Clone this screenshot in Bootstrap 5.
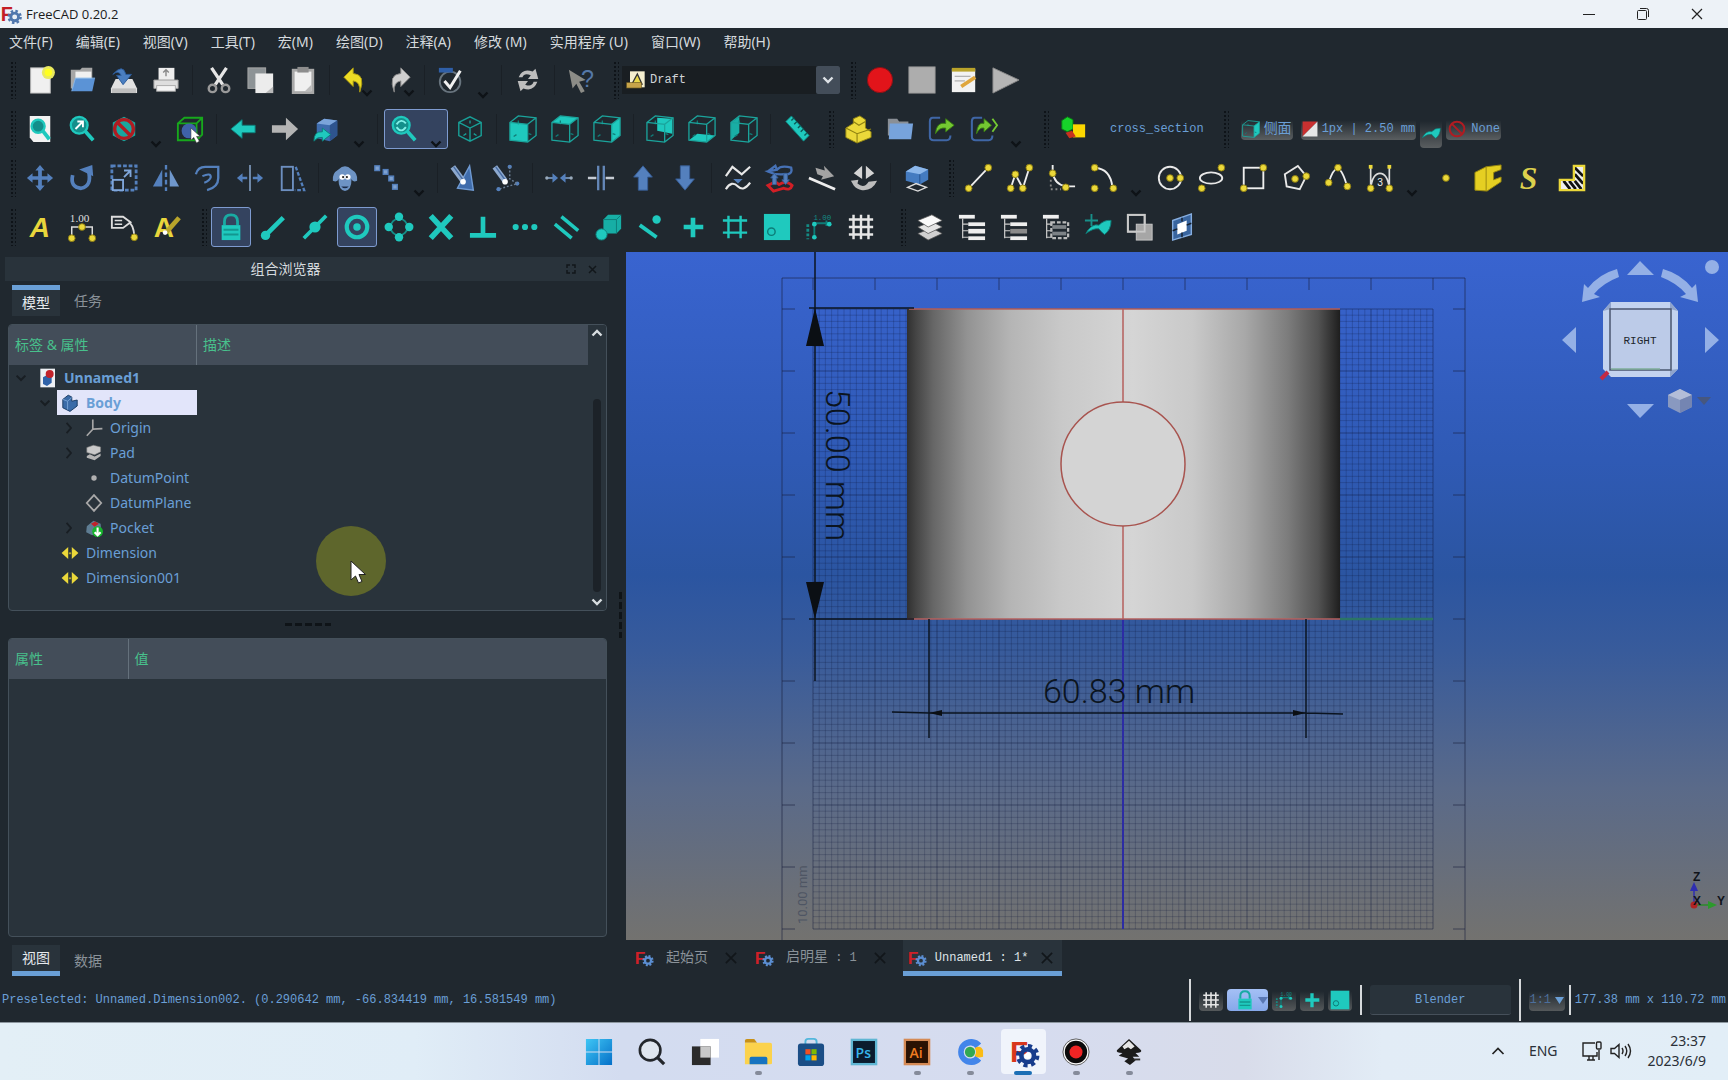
<!DOCTYPE html>
<html lang="zh-CN">
<head>
<meta charset="utf-8">
<meta name="viewport" content="width=device-width, initial-scale=1">
<title>FreeCAD 0.20.2</title>
<link href="https://cdn.jsdelivr.net/npm/bootstrap@5.3.0/dist/css/bootstrap.min.css" rel="stylesheet">
<style>
:root{--ink:#20282f;--panel:#29333b;--head:#434d59;--line:#44505a;--blue:#6a9fd6;--green:#48c08c}
body{font-family:"Noto Sans","Noto Sans CJK SC",sans-serif;font-size:14px;line-height:20px;color:#d5dade;background:var(--ink)}
button{font:inherit;color:inherit;background:none;border:0;padding:0}
svg{display:block;flex:none}
.app{height:100vh;overflow:hidden}
.mono{font-family:"Liberation Mono","Noto Sans CJK SC",monospace;font-size:12px}
.titlebar{height:28px;background:#edf2f7;color:#1b1b1b;font-size:13px;font-family:"Open Sans",sans-serif}
.titlebar .wbtn{width:54px;height:28px}
.menubar{height:27px;padding:0 0 0 9px;gap:23px}
.menubar button{white-space:nowrap}
.toolbars{padding-bottom:1px}
.toolrow{height:49px}
.grip{width:6px;height:38px;margin:0 3px 0 11px;background-image:radial-gradient(circle,#0e1318 1px,transparent 1px);background-size:4px 4px}
.grip:first-child{margin-left:10px}
.tsep{width:1px;height:30px;margin:0 5px;background:#1a2026}
.tool{width:40px;height:40px;margin:0 1px;border:1px solid transparent;border-radius:3px;position:relative;display:flex;align-items:center;justify-content:center}
.tool.wide{width:64px;justify-content:flex-start;padding-left:5px}
.tool.wide .arr{right:5px;bottom:0}
.tool .arr{position:absolute;right:2px;bottom:2px}
.glyph{overflow:visible}
.tool.on{background:#34435f;border-color:#7e9bd0}
.combo{width:218px;height:28px;background:#191e22}
.combo select{appearance:none;background:none;border:0;color:#d0d3d6;outline:0}
.combo .drop{width:24px;height:28px;background:#434d59;border-radius:2px}
.chip{height:22px;padding:0 1px;gap:4px;color:var(--blue);border-radius:4px;background:linear-gradient(#20282f 10%,#5a5e60);white-space:nowrap}
.chip.tall{height:30px;margin-bottom:-8px}
.groupname{color:var(--blue)}
.dock{flex:0 0 626px;padding:5px 19px 0 8px;position:relative}
.docktitle{height:24px;background:var(--panel);margin:0 -2px 4px -3px}
.tabbtn{height:31px;width:48px;color:#8a9299;font-size:14px}
.tabbtn.on{background:var(--panel);color:#e6eaee}
.tabbtn.topbar{border-top:5px solid var(--blue)}
.tabbtn.botbar{border-bottom:5px solid var(--blue)}
.tabs{gap:4px;padding-left:4px}
.pane{border:1px solid var(--line);border-radius:4px;background:var(--panel);min-height:0;overflow:hidden}
.treepane{flex:287 1 0}
.proppane{flex:299 1 0}
.headrow{height:40px;background:var(--head);color:var(--green)}
.headrow .c1{width:188px;padding-left:6px;border-right:1px solid #65717c}
.headrow .c2{padding-left:6px}
.tree{color:var(--blue);padding:0}
.tree li{height:25px;display:flex;align-items:center;width:188px;white-space:nowrap}
.tree li .tw{width:24px;flex:none;display:flex;justify-content:center}
.tree .lab{display:flex;align-items:center;gap:7px;height:25px;padding-left:4px;flex:1}
.tree .sel{background:#e2e5fa}
.tree .d1{padding-left:24px}.tree .d2{padding-left:48px}
.scroll{width:18px;background:var(--panel)}
.scroll .thumb{width:8px;flex:1;margin:62px 0 6px;background:#1c2228;border-radius:4px}
.dash{height:27px}
.dash i{width:46px;height:3px;background:repeating-linear-gradient(90deg,#0f1418 0 7px,transparent 7px 10px)}
.vdash{position:absolute;right:4px;top:340px;width:3px;height:46px;background:repeating-linear-gradient(#0f1418 0 7px,transparent 7px 10px)}
.prop{width:100%;color:var(--green);border-collapse:collapse}
.prop th{height:40px;background:var(--head);font-weight:400;padding-left:6px}
.prop th:first-child{width:119px;border-right:1px solid #65717c}
.pointer{position:absolute;left:316px;top:274px}
.doctabs{height:36px}
.doctab{height:36px;padding:4px 8px 0 4px;border-bottom:5px solid transparent;color:#8a9299;white-space:nowrap}
.doctab.on{background:var(--panel);border-color:var(--blue);color:#dfe4e8}
.doctab .cjk{font-size:14px}
.status{height:46px;color:var(--blue);padding:2px 2px 0 2px}
.vl{width:2px;background:#d5d8da}
.mini{width:24px;height:22px;border-radius:4px;background:linear-gradient(#20282f 10%,#55595b);display:flex;align-items:center;justify-content:center}
.mini.lock{width:41px;background:linear-gradient(#a4c0f5,#86a8ea);gap:3px;padding-left:8px}
.mini.zoomscale{width:36px;color:#4d6f9c}
.style{width:141px;height:30px;background:var(--panel);border-bottom:1px solid #46505a;border-radius:3px;color:var(--blue)}
.taskbar{height:58px;background:linear-gradient(90deg,#e3eff6 0,#e0edf7 24%,#d3dcf0 36%,#d6dcef 60%,#d8dcea 72%,#e2ecf6 80%,#e2eef7);color:#2a3038;position:relative;border-top:1px solid #8d979f}
.apps{gap:8px}
.appbtn{width:45px;height:45px;border-radius:4px;position:relative;display:flex;align-items:center;justify-content:center}
.appbtn.on{background:#f0f4fb}
.appbtn.run::after{content:"";position:absolute;bottom:-1px;width:7px;height:4px;border-radius:2px;background:#858b9a}
.appbtn.on::after{width:18px;background:#1c6fb5}
.tray{position:absolute;right:22px;top:0;height:55px}
</style>
<script src="https://cdn.jsdelivr.net/npm/bootstrap@5.3.0/dist/js/bootstrap.bundle.min.js"></script>
</head>
<body>
<div class="app d-flex flex-column">

<header class="titlebar d-flex align-items-center flex-shrink-0">
  <span data-icon="fclogo" data-size="22"></span>
  <span class="ps-1 me-auto">FreeCAD 0.20.2</span>
  <button class="wbtn d-flex align-items-center justify-content-center" aria-label="Minimize"><svg width="12" height="12"><path d="M0 6.5h12" stroke="#222"/></svg></button>
  <button class="wbtn d-flex align-items-center justify-content-center" aria-label="Restore"><svg width="12" height="12" fill="none" stroke="#222"><rect x=".5" y="2.500" width="9" height="9" rx="1"/><path d="M3 .5h6.500a2 2 0 0 1 2 2V9"/></svg></button>
  <button class="wbtn d-flex align-items-center justify-content-center me-1" aria-label="Close"><svg width="12" height="12"><path d="M1 1l10 10M11 1L1 11" stroke="#222" stroke-width="1.200"/></svg></button>
</header>

<nav class="menubar d-flex align-items-center flex-shrink-0">
  <button>文件(F)</button><button>编辑(E)</button><button>视图(V)</button><button>工具(T)</button><button>宏(M)</button><button>绘图(D)</button><button>注释(A)</button><button>修改 (M)</button><button>实用程序 (U)</button><button>窗口(W)</button><button>帮助(H)</button>
</nav>

<div class="toolbars flex-shrink-0">
  <div class="toolrow d-flex align-items-center">
    <div class="d-flex align-items-center" data-bar="new open save print | cut copy paste | undo^ redo^ | valid_ | refresh | whats"></div>
    <i class="grip"></i>
    <div class="combo d-flex align-items-center">
      <span class="ps-1" data-icon="draft" data-size="20"></span>
      <select class="mono flex-fill ps-1" aria-label="Workbench"><option>Draft</option></select>
      <span class="drop d-flex align-items-center justify-content-center"><svg width="12" height="8"><path d="M1.500 1.500L6 6l4.500-4.500" fill="none" stroke="#dde2e6" stroke-width="2.400"/></svg></span>
    </div>
    <div class="d-flex align-items-center" data-bar="rec stop macro play"></div>
  </div>
  <div class="toolrow d-flex align-items-center">
    <div class="d-flex align-items-center" data-bar="fitall fitsel drawstyle_ boxsel | back fwd link_ | zoomv_* iso | cfront ctop cright | crear cbottom cleft | measure"></div>
    <div class="d-flex align-items-center" data-bar="part folder mklink mklinks_"></div>
    <div class="d-flex align-items-center ms-1" data-bar="group"></div>
    <button class="groupname mono ps-3 pe-2">cross_section</button>
    <i class="grip me-2"></i>
    <div class="d-flex mono gap-1 ms-1 align-items-center">
      <button class="chip d-flex align-items-center"><span data-icon="cright" data-size="18"></span><span style="font-size:14px">侧面</span></button>
      <button class="chip d-flex align-items-center ms-1"><span data-icon="style" data-size="16"></span>1px | 2.50 mm</button>
      <button class="chip tall d-flex align-items-center" aria-label="Construction"><span data-icon="trowel" data-size="20"></span></button>
      <button class="chip d-flex align-items-center"><span data-icon="none" data-size="20"></span>None</button>
    </div>
  </div>
  <div class="toolrow d-flex align-items-center">
    <div class="d-flex align-items-center" data-bar="move rotate scale mirror offset trimex stretch | clone array_ | edit subel | join split up down | wire2bs shapes slope flip | view2d"></div>
    <div class="d-flex align-items-center" data-bar="line wire fillet arc_ circle ellipse rect polygon bspline bezier_ point facebind sstring hatch"></div>
  </div>
  <div class="toolrow d-flex align-items-center">
    <div class="d-flex align-items-center" data-bar="text dim label astyle"></div>
    <div class="d-flex align-items-center ms-1" data-bar="lock* send smid scenter* sangle sinter sperp sext spar sspecial snear sortho sgrid swp sdim gridw"></div>
    <div class="d-flex align-items-center ms-2" data-bar="layers list1 list2 list3 trowelp addc wpproxy"></div>
  </div>
</div>

<main class="d-flex flex-fill" style="min-height:0">
  <aside class="dock d-flex flex-column">
    <div class="docktitle d-flex align-items-center flex-shrink-0">
      <span class="flex-fill text-center">组合浏览器</span>
      <button aria-label="Float" class="me-2 pe-1"><svg width="10" height="10" stroke="#12171b" fill="none" stroke-width="1.500"><path d="M1 4V1h3M6 1h3v3M9 6v3H6M4 9H1V6"/></svg></button>
      <button aria-label="Close" class="me-2 pe-1"><svg width="9" height="9" stroke="#12171b" stroke-width="1.500"><path d="M1 1l7 7M8 1L1 8"/></svg></button>
    </div>
    <div class="tabs d-flex flex-shrink-0 mb-2"><button class="tabbtn on topbar">模型</button><button class="tabbtn">任务</button></div>
    <div class="pane treepane d-flex">
      <div class="flex-fill">
        <div class="headrow d-flex"><div class="c1 d-flex align-items-center">标签 &amp; 属性</div><div class="c2 d-flex align-items-center">描述</div></div>
        <ul class="tree list-unstyled m-0">
          <li><span class="tw" data-icon="tdown" data-size="12"></span><span class="lab fw-bold"><span data-icon="doc" data-size="20"></span>Unnamed1</span></li>
          <li class="d1"><span class="tw" data-icon="tdown" data-size="12"></span><span class="lab sel fw-bold"><span data-icon="body" data-size="18"></span>Body</span></li>
          <li class="d2"><span class="tw" data-icon="tright" data-size="12"></span><span class="lab"><span data-icon="origin" data-size="18"></span>Origin</span></li>
          <li class="d2"><span class="tw" data-icon="tright" data-size="12"></span><span class="lab"><span data-icon="pad" data-size="18"></span>Pad</span></li>
          <li class="d2"><span class="tw"></span><span class="lab"><span data-icon="dpoint" data-size="18"></span>DatumPoint</span></li>
          <li class="d2"><span class="tw"></span><span class="lab"><span data-icon="dplane" data-size="18"></span>DatumPlane</span></li>
          <li class="d2"><span class="tw" data-icon="tright" data-size="12"></span><span class="lab"><span data-icon="pocket" data-size="18"></span>Pocket</span></li>
          <li class="d1"><span class="tw"></span><span class="lab"><span data-icon="dimi" data-size="18"></span>Dimension</span></li>
          <li class="d1"><span class="tw"></span><span class="lab"><span data-icon="dimi" data-size="18"></span>Dimension001</span></li>
        </ul>
      </div>
      <div class="scroll d-flex flex-column align-items-center py-1">
        <svg width="12" height="8"><path d="M1.500 6.500L6 2l4.500 4.500" fill="none" stroke="#d8dde0" stroke-width="2.400"/></svg>
        <span class="thumb"></span>
        <svg width="12" height="8"><path d="M1.500 1.500L6 6l4.500-4.500" fill="none" stroke="#d8dde0" stroke-width="2.400"/></svg>
      </div>
    </div>
    <div class="dash d-flex align-items-center justify-content-center flex-shrink-0"><i></i></div>
    <div class="pane proppane">
      <table class="prop"><thead><tr><th>属性</th><th>值</th></tr></thead></table>
    </div>
    <div class="tabs d-flex flex-shrink-0 mt-2"><button class="tabbtn on botbar">视图</button><button class="tabbtn">数据</button></div>
    <span class="vdash"></span>
    <svg class="pointer" width="70" height="70"><circle cx="35" cy="35" r="35" fill="#5e662c"/><path d="M35 35v19l4.500-4 3 7 3.500-1.500-3-7h6.500z" fill="#fff" stroke="#222"/></svg>
  </aside>

  <section class="d-flex flex-column flex-fill" style="min-width:0">
    <div class="flex-fill" style="min-height:0">
      <svg id="view" width="100%" height="100%" viewBox="626 252 1102 688" preserveAspectRatio="xMidYMid slice"></svg>
    </div>
    <div class="doctabs d-flex flex-shrink-0 mono">
      <button class="doctab d-flex align-items-center ms-1"><span data-icon="fctab" data-size="20"></span><span class="cjk ps-2 ms-1 me-3">起始页</span><span data-icon="tabx" data-size="14"></span></button>
      <button class="doctab d-flex align-items-center ms-1"><span data-icon="fctab" data-size="20"></span><span class="ps-2 ms-1 me-3"><span class="cjk">启明星</span> : 1</span><span data-icon="tabx" data-size="14"></span></button>
      <button class="doctab on d-flex align-items-center ms-2"><span data-icon="fctab" data-size="20"></span><span class="px-2 me-1">Unnamed1 : 1*</span><span data-icon="tabx" data-size="14"></span></button>
    </div>
  </section>
</main>

<footer class="status mono d-flex align-items-center flex-shrink-0">
  <span class="me-auto text-nowrap">Preselected: Unnamed.Dimension002. (0.290642 mm, -66.834419 mm, 16.581549 mm)</span>
  <i class="vl me-2" style="height:42px"></i>
  <div class="d-flex gap-1 align-items-center">
    <button class="mini" aria-label="Grid"><span data-icon="gridw" data-size="18"></span></button>
    <button class="mini lock" aria-label="Snap lock"><span data-icon="lock" data-size="20"></span><svg width="10" height="8"><path d="M0 1h10L5 8z" fill="#5a78b4"/></svg></button>
    <button class="mini" aria-label="Snap dimensions"><span data-icon="sdim" data-size="18"></span></button>
    <button class="mini" aria-label="Ortho"><span data-icon="sortho" data-size="20"></span></button>
    <button class="mini" aria-label="Working plane"><span data-icon="swp" data-size="20"></span></button>
  </div>
  <i class="vl ms-2 me-2" style="height:30px"></i>
  <button class="style">Blender</button>
  <i class="vl ms-2 me-2" style="height:42px"></i>
  <button class="mini zoomscale gap-1">1:1<svg width="9" height="7"><path d="M0 0h9L4.500 7z" fill="#6a9fd6"/></svg></button>
  <i class="vl ms-1 me-1" style="height:30px"></i>
  <span class="text-nowrap">177.38 mm x 110.72 mm</span>
</footer>

<footer class="taskbar d-flex align-items-center justify-content-center flex-shrink-0">
  <div class="apps d-flex" id="apps"></div>
  <div class="tray d-flex align-items-center">
    <button aria-label="Hidden icons" class="me-4"><svg width="14" height="10"><path d="M1.500 8L7 2.500 12.500 8" fill="none" stroke="#222" stroke-width="1.700"/></svg></button>
    <span class="me-4">ENG</span>
    <svg class="me-2" width="20" height="20" fill="none" stroke="#222" stroke-width="1.400"><path d="M13 2H1v13h14v-4M5 19h8M7 15v4M11 15v4M17 9v10"/><rect x="14.500" y="1" width="4.500" height="7" rx="1"/></svg>
    <svg class="me-3" width="22" height="20" fill="none" stroke="#222" stroke-width="1.400"><path d="M1 7.500h3.500L9 3.500v13l-4.500-4H1zM12 7q2 3 0 6M15 5q3.500 5 0 10M18 3q5 7 0 14"/></svg>
    <div class="text-end">23:37<br>2023/6/9</div>
  </div>
</footer>
</div>

<script>
const T='#1fc9be',TD='#0d7d78',B='#5480bd',Y='#ebd83a';
const p=(d,f,s,w)=>`<path d="${d}" fill="${f||'none'}"${s?` stroke="${s}" stroke-width="${w||1.5}"`:''}/>`;
const c=(x,y,r,f,s,w)=>`<circle cx="${x}" cy="${y}" r="${r}" fill="${f||'none'}"${s?` stroke="${s}" stroke-width="${w||1.5}"`:''}/>`;
const r=(x,y,w,h,f,s,k)=>`<rect x="${x}" y="${y}" width="${w}" height="${h}" fill="${f||'none'}"${s?` stroke="${s}" stroke-width="${k||1.5}"`:''}/>`;
const t=(x,y,z,f,s,e)=>`<text x="${x}" y="${y}" font-size="${z}" fill="${f}" ${e||''}>${s}</text>`;
const dots=(...a)=>{let o='';for(let i=0;i<a.length;i+=2)o+=c(a[i],a[i+1],3.6,Y,'#8a7a10',1);return o};
const faces={front:'M1 8L20 10V29L1 27Z',top:'M1 8L10 1L29 3L20 10Z',right:'M20 10L29 3V22L20 29Z',rear:'M12 3L28 4V20L12 17Z',left:'M1 8L10 2V19L1 27Z',bottom:'M1 27L10 20L29 22L20 29Z'};
const cube=(k)=>(k?p(faces[k],k=='left'?'#19aea5':T):'')+p('M10 6V10M5 23L8 21M21 20L24 21','','#107d78',1.400)+p('M1 8L10 1L29 3V22L20 29L1 27ZM1 8L20 10V29M20 10L29 3','','#1ba49c',1.400);
const solid=(a,b,d)=>p('M4 9L12 4L26 6V22L18 28L4 25Z',a)+p('M4 9L12 4L26 6L18 11Z',b)+p('M18 11L26 6V22L18 28Z',d);
const lens=(x,y,q)=>p(`M${x+6} ${y+6}L${x+15} ${y+16}`,'',T,4)+c(x,y,q,'#148f8b',T,2.5);
const gear=(x,y,q,f,h)=>`<circle cx="${x}" cy="${y}" r="${q}" fill="none" stroke="${f}" stroke-width="${q*.8}" stroke-dasharray="${q*.42} ${q*.365}"/><circle cx="${x}" cy="${y}" r="${q*.75}" fill="none" stroke="${f}" stroke-width="${q*.55}"/>`+(h?c(x,y,q*.35,h):'');
const bold='font-family="Liberation Sans" font-weight="700"';
const no=(x,y,q,w)=>c(x,y,q,'','#b01c22',w)+p(`M${x-q*.7} ${y-q*.7}L${x+q*.7} ${y+q*.7}`,'','#b01c22',w);
const list=(m)=>r(1,2,17,4,'#f0f0f0')+p('M5 6V27M5 12H11M5 19H11M5 26H11','','#ccc',1.3)+(m==3?`<path d="M10 10H28V27H10Z" fill="none" stroke="#bbb" stroke-width="2.400" stroke-dasharray="4 2"/>`+r(11,13,15,4,'#7d8286')+r(11,20,15,4,'#7d8286'):r(11,10,18,4,'#eee')+r(11,17,18,5,m==2?'#8a8a8a':'#eee')+r(11,25,18,4,'#eee'));
const trowel=p('M2 22Q8 11 16 13Q22 7 29 8Q29 18 22 23Q18 20 16 17Q10 16 2 22Z',T,TD,1);
const blueArr=(d)=>p(d,B,'#365d96',1);
const pen=p('M3 3L14 18','','#8da9cf',6)+p('M4 3L14 17','','#456aa0',1.500)+c(14,19,3,'#fff');
const I={
fclogo:t(1,25,27,'#c41e26','F',bold)+gear(20,19,7,'#5077ad','#e9eef5'),
fctab:t(1,24,26,'#cf2028','F',bold)+gear(21,19,6,'#5b8ed2'),
new:r(5,2,21,27,'#f0f0f0','#bbb',1)+c(24,7,7,'#e9e95f')+c(24,7,4,'#ffff20'),
open:p('M3 4H13L15 2H26V24H3Z','#a6a6a6')+r(8,6,17,16,'#f0f0f0')+p('M4 27L8 13H29L26 27Z','#5b93d6')+p('M4 27L8 13H29','','#83b5ea',1),
save:p('M6 14H24L29 24V29H1V24Z','#e2e2e2')+r(2,24,26,5,'#bfbfbf')+p('M3 9Q14-3 17 9H23L14 20L7 10H12Q9 4 3 9Z','#4a7ec0','#2c5c9c',1),
print:r(7,2,17,13,'#eee')+p('M15 4V11M12 7L15 4L18 7','','#888',1.5)+p('M2 15H28V24H2Z','#dedede','#999',1)+r(5,21,20,6,'#f4f4f4','#aaa',1),
cut:p('M7 2L19 20M23 2L11 20','','#e6e6e6',3.5)+c(8,24,4,'','#9a9a9a',2.6)+c(22,24,4,'','#9a9a9a',2.6),
copy:r(1,2,19,22,'#8d9396','#a8a8a8',1)+r(9,8,19,21,'#ececec')+p('M20 29L28 22V29Z','#b9b9b9'),
paste:r(3,3,24,27,'#a9a9a9')+r(6,6,18,21,'#f0f0f0')+r(9,1,12,6,'#8d8d8d')+p('M17 27L24 20V27Z','#bbb'),
undo:p('M2 12L12 2V8Q26 9 19 28Q20 17 12 16V22Z','#eddc25','#a89810',1),
redo:p('M28 12L18 2V8Q4 9 11 28Q10 17 18 16V22Z','#cfcfcf','#888',1),
valid:c(14,17,11,'','#68747e',2)+p('M8 16L14 23L25 5','','#f0f0f0',3.2)+r(2,2,15,5,'#2f5fa8'),
refresh:p('M5 12Q9 2 20 6L23 3L26 14H15L18 10Q11 7 9 12ZM25 17Q21 28 10 24L7 27L4 16H15L12 20Q19 23 21 17Z','#bdbdbd'),
whats:p('M2 4L20 15L13 17L19 27L15 29L10 19L6 24Z','#8c8c87')+t(15,22,25,'#5578a8','?','font-family="Liberation Sans"'),
draft:r(6,2,22,24,'#f5efcf')+p('M9 21L17 6L24 21Z','#e9d84a','#333',2)+r(1,19,22,8,'#c7a44a','#6e5a20',1),
rec:c(15,15,13.500,'#e2141a','#8b1014',1),stop:r(1,1,28,28,'#adadad','#9a9a9a',1),
macro:r(2,3,25,25,'#f2f2f2')+r(2,2,25,4,'#b9a32a')+p('M5 11H22M5 16H16','','#999',1)+p('M12 22L27 12','','#dfa63d',4),
play:p('M1 2L29 15L1 29Z','#b5b5b5','#888',1),
fitall:p('M4 1H26V29H8L4 24Z','#f2f2f2')+p('M18 17L25 26','',T,4)+c(13,12,7,'#148f8b',T,2.500),
fitsel:lens(12,11,9)+p('M8 15L16 7M10 7H16V13','','#fff',2),
drawstyle:p('M3 8L15 2L27 8V22L15 28L3 22Z','#1aa69e')+no(15,15,10,3.6),
boxsel:p('M2 9L9 3H28V21L22 27H2ZM2 9H22V27M22 9L28 3','','#17a81c',2)+c(14,17,8,'#3f61a8')+p('M16 14V27L19 24L22 30L25 28L22 23H26Z','#fff','#333',.6),
back:p('M2 15L14 5V11H28V19H14V25Z',T,TD,1),fwd:p('M29 15L16 3V11H1V19H16V27Z','#b4b4b4'),
link:solid('#3e6cae','#7ba4da','#2e548e')+p('M1 28Q1 17 10 18V14L19 21L10 28V24Q5 23 1 28Z',T,TD,1),
zoomv:lens(12,11,9)+p('M7 10Q12 3 17 9M17 13Q12 20 7 13','','#7ff0e8',2),
iso:p('M3 8L15 2L27 8V22L15 28L3 22ZM3 8L15 14L27 8M15 14V28','','#18a098',1.500)+p('M15 6V9M8 22L11 20M22 22L19 20','','#18a098',1.400),
cfront:cube('front'),ctop:cube('top'),cright:cube('right'),crear:cube('rear'),cbottom:cube('bottom'),cleft:cube('left'),
measure:p('M3 7L9 1L28 22L22 28Z',T,TD,1)+p('M9 6L12 3M12 10L15 7M16 14L19 11M19 18L22 15M23 22L26 19','','#0b5b58',1.500),
part:p('M2 14L10 9V4L17 1L23 5V14L29 18V24L14 30L2 24Z',Y,'#8f8212',1)+p('M2 14L14 20L29 15M10 7L16 11L23 7M14 20V30','','#8f8212',1.200),
folder:p('M2 4H12L14 7H24V22H2Z','#8a8f96')+p('M4 9H29L27 26H3Z','#77a3dc'),
mklink:p('M13 3H5Q2 3 2 7V23Q2 27 6 27H20Q24 27 24 22','','#3f66a6',2.200)+p('M8 20Q9 7 19 9V4L28 11L19 18V14Q12 13 8 20Z','#74c832','#3a7d12',1),
mklinks:p('M13 3H5Q2 3 2 7V23Q2 27 6 27H20Q24 27 24 22','','#3f66a6',2.200)+p('M7 20Q8 7 15 9V4L23 11L15 18V14Q10 13 7 20Z','#74c832','#3a7d12',1)+p('M24 4L29 11L24 18','','#74c832',2),
group:p('M3 6L9 2L15 5V15L9 18L3 15Z','#17d32a','#0a7a14',1)+r(15,10,13,14,'#fcd700')+p('M7 19L14 17L18 23L11 25Z','#c8321e'),
style:p('M1 1H29L1 29Z','#c83030')+p('M29 1V29H1Z','#e6e6e6'),
trowel, none:no(15,15,11,3),
move:p('M15 1L20 7H17V13H23V10L29 15L23 20V17H17V23H20L15 29L10 23H13V17H7V20L1 15L7 10V13H13V7H10Z',B),
rotate:p('M5 12Q2 25 14 26Q26 24 22 7','',B,4)+p('M12 6L26 1L27 13Z',B),
scale:`<rect x="2" y="2" width="26" height="26" fill="none" stroke="${B}" stroke-width="3" stroke-dasharray="4 2"/>`+r(3,17,11,11,'#20282f','#7fa6da',2)+p('M15 14L21 8M15 7H22V14','','#7fa6da',2),
mirror:p('M11 6V24H1Z',B)+p('M19 6V24H29Z','#6f97cc')+`<path d="M15 1V29" stroke="${B}" stroke-width="2.500" stroke-dasharray="5 3"/>`,
offset:p('M2 11Q4 3 12 3H26V15Q26 25 14 28','',B,2.500)+p('M9 13Q18 9 18 14Q17 18 11 20','',B,2.300),
trimex:p('M15 1V29','','#7590b0',2)+p('M12 15H4M18 15H26','',B,2.500)+p('M7 10V20L1 15ZM23 10V20L29 15Z',B),
stretch:r(4,3,12,25,'','#6d8fc0',2)+`<path d="M19 3L28 28H18" fill="none" stroke="${B}" stroke-width="2.500" stroke-dasharray="4 2"/>`,
clone:p('M8 6Q15-1 22 6Q29 10 28 18Q23 20 22 16Q22 28 15 29Q8 28 8 16Q7 20 2 18Q1 10 8 6Z','#6d93c4')+c(12,14,3,'#fff')+c(18,14,3,'#fff')+c(13,14,1.200,'#222')+c(17,14,1.200,'#222')+p('M11 24Q15 28 19 24Z','#1c2d4a'),
array:r(2,2,5,5,'#7fa2d0',B)+r(11,6,5,5,'#7fa2d0',B)+r(17,13,5,5,'#7fa2d0',B)+r(21,22,5,5,'#7fa2d0',B),
edit:p('M21 2L25 28L8 26Z','#3f6cab','#6f9ad2',1.500)+pen,
subel:c(19,3,2.300,B)+c(27,21,2.300,B)+c(7,27,2.300,B)+`<path d="M19 3V16L27 21L7 27" fill="none" stroke="#6b7f96" stroke-width="1.500" stroke-dasharray="2 2"/>`+pen,
join:p('M2 15H10M20 15H28','','#6b86a8',2)+p('M8 10L14 15L8 20ZM22 10L16 15L22 20Z',B)+c(2,15,1.800,'#9ab')+c(28,15,1.800,'#9ab'),
split:p('M1 15H10M20 15H29','','#c6ccd4',2.500)+p('M12 2V28M18 2V28','','#6487b8',2.500),
up:blueArr('M15 2L25 14H20V28H10V14H5Z'),down:blueArr('M15 28L25 16H20V2H10V16H5Z'),
wire2bs:p('M2 13L9 3L19 11L28 3M2 27Q8 17 15 24Q21 30 28 20','','#e8e8e8',2.300)+p('M10 16H20L15 21Z',B),
shapes:p('M2 8L10 2L12 7M12 6Q16 1 27 4Q29 12 19 11Q10 12 2 8Z','','#4671b5',2.500)+p('M2 23L10 19L14 22Q22 17 28 23Q26 29 19 26L8 29Z','','#d21f26',3)+blueArr('M9 10L13 15H11V22H7V15H5ZM21 22L25 17H23V10H19V17H17Z'),
slope:p('M1 15L29 27','','#ededed',3)+p('M8 4L18 7L17 2L28 13L14 17L16 13L10 11Z','#a3a3a3'),
flip:p('M13 2V16L4 10ZM17 2V16L26 10Z','#d4d4d4')+p('M1 18L9 17L8 21Q15 27 20 19L29 18Q24 29 13 28Q7 27 4 23Z','#bdbdbd'),
view2d:p('M3 8L13 2L27 6V17L18 22L3 18Z','#447bc0')+p('M3 8L13 2L27 6L18 11Z','#8cb7ea')+p('M18 11V22','','#24508c',1)+p('M5 25L14 21L25 25L16 29Z','','#ddd',1.500),
line:p('M6 25L25 5','','#eee',2)+dots(5,26,26,4),
wire:p('M5 26L10 11L18 26L25 4','','#eee',2)+dots(5,26,10,11,18,26,25,4),
fillet:p('M5 1V9Q7 22 19 24H29','','#eee',2)+dots(5,10,19,25)+`<path d="M3 17V27H14" fill="none" stroke="#888" stroke-width="2" stroke-dasharray="2 3"/>`,
arc:p('M5 4Q22 5 24 25','','#eee',2)+dots(5,4,5,26,25,26),
circle:c(15,15,12,'','#e8e8e8',2)+dots(15,15,26,15),
ellipse:`<ellipse cx="14" cy="15" rx="12" ry="6" fill="none" stroke="#e8e8e8" stroke-width="2"/>`+dots(4,26,25,4),
rect:r(4,4,21,22,'','#eee',2)+dots(4,26,25,4),
polygon:p('M3 11L17 2L26 13L19 27L5 24Z','','#e8e8e8',2)+dots(14,16,26,13),
bspline:p('M5 20Q15-12 25 25','','#eee',2)+dots(5,20,15,4,25,24),
bezier:p('M5 26Q7 10 15 10Q23 10 25 26M5 3V26M25 3V26','','#ddd',1.800)+r(3,1,4,4,Y)+r(23,1,4,4,Y)+t(12,24,11,'#eee','3','font-family="Liberation Sans"')+dots(5,26,25,26),
point:dots(15,15),
facebind:p('M1 9L13 3L29 1V6L21 9V17L29 14V19L14 29L1 28Z','#e5cf22','#97870f',1)+p('M13 3V29','','#97870f',1),
sstring:t(4,27,34,'#ddd14d','S','font-family="Liberation Serif" font-style="italic" font-weight="700"'),
hatch:p('M17 2H28V28H2V17H17Z','#eee')+p('M6 18L13 27M12 18L19 27M18 18L25 27M18 11L27 21M18 4L27 13','','#111',3)+p('M17 2H28V28H2V17H17Z','',Y,2.500),
text:t(4,26,30,'#e9d63c','A','font-family="Liberation Sans" font-style="italic" font-weight="700"'),
dim:t(2,10,12,'#dedede','1.00','font-family="Liberation Serif"')+p('M4 26V15H26V26','','#ddd',1.600)+dots(15,15,4,27,26,27),
label:p('M2 4H14L22 10L14 16H2ZM20 10Q25 12 26 24','','#ddd',2)+p('M5 8H13M5 12H13','','#ddd',1.500)+dots(26,26),
astyle:t(2,26,30,'#e9d63c','A',bold)+p('M29 5L15 21','','#b9a52b',5)+c(14,21,2.500,'#fff'),
lock:p('M8 13V9Q8 2 15 2Q22 2 22 9V13','','#19aaa3',3)+r(5,13,20,16,T)+p('M7 18H23M7 23H23','','#139790',2),
send:p('M8 23L26 5','',T,5)+c(7,24,5,T),smid:p('M3 27L27 3','',T,4)+c(15,15,6,T),
scenter:c(15,15,11,'',T,4.500)+c(15,15,4,T),
sangle:c(15,15,9,'','#158e88',2)+c(15,4,4.500,T)+c(15,26,4.500,T)+c(4,15,4.500,T)+c(26,15,4.500,T),
sinter:p('M4 3L26 27M26 3L4 27','',T,6),sperp:p('M15 4V24M1 24H29','',T,5),
sext:c(5,15,3.300,T)+c(15,15,3.300,T)+c(25,15,3.300,T),
spar:p('M2 12L20 27M9 4L27 19','',T,3.800),
sspecial:p('M9 7L14 2H28V17L23 22H9Z','#17aea5')+p('M9 7H23V22M23 7L28 2','',TD,1)+c(7,23,6,T,TD,1),
snear:p('M3 13L21 26','',T,4)+c(21,7,4.500,T),sortho:p('M15 5V26M5 15H26','',T,5),
sgrid:p('M8 3V27M21 3V27M2 8H28M2 21H28','',T,2.600),
swp:r(1,1,28,28,T)+c(9,20,4,'',TD,1.500),
sdim:p('M10 26V11H27M23 8V14','',TD,2)+c(10,12,2.500,T)+c(10,26,2.500,T)+c(26,12,2.500,T)+t(9,8,8,'#148a84','1.00','font-family="Liberation Mono"')+`<path d="M3 12V28" stroke="#148a84" stroke-width="3" stroke-dasharray="3 2"/>`,
gridw:p('M7 2V28M15 2V28M23 2V28M2 7H28M2 15H28M2 23H28','','#e6e6e6',2.600),
layers:p('M2 22L17 16L28 22L13 29Z','#d0d0d0','#555',.8)+p('M2 15L17 9L28 15L13 22Z','#e4e4e4','#555',.8)+p('M2 8L17 2L28 8L13 15Z','#fafafa','#555',.8),
list1:list(1),list2:list(2),list3:list(3),
trowelp:trowel+p('M8 1V14M1 8H15','','#18908a',2),
addc:r(2,2,18,18,'#20282f','#c9c9c9',2)+r(11,12,17,17,'#a6a6a6','#c9c9c9',1)+r(2,2,18,18,'','#c9c9c9',2),
wpproxy:p('M5 8L25 1V23L5 29Z','#39659f','#86aee0',1.500)+p('M10 12L20 8V19L10 23Z','#fff')+p('M5 19L10 17M20 13L25 11M15 5V9M15 21V26','','#14202e',1.500),
tdown:p('M4 9L15 20L26 9','','#181e23',5),tright:p('M9 2L20 15L9 28','','#181e23',4.500),
doc:r(5,1,22,28,'#eef0f4')+p('M9 14L16 10L22 13V22L15 27L9 24Z','#2f62a8')+c(19,9,6,'#c2222a'),
body:p('M3 9L12 2L18 5V12L27 10V20L15 29L3 23Z','#3a6ba8','#16385f',1.500)+p('M3 9L11 12L18 6M11 12V26','','#7ba6d8',1.500),
origin:p('M13 1V17L3 28M13 17L29 16','','#a6a6a6',2.800),
pad:p('M3 6L14 2L26 5V13L16 18L3 14Z','#c9c9c9','#777',1)+p('M3 20L8 17L16 21L26 16V20L16 27L3 23Z','#b5b5b5'),
dpoint:c(15,15,4.500,'#b0b0b0'),dplane:p('M15 2L27 15L15 28L3 15Z','','#a8a8a8',3),
pocket:p('M3 12L14 3L26 8L27 20L12 27L2 22Z','#5e7d93')+p('M10 8L17 4L23 8L16 13Z','#c2222a')+c(21,21,9,'#16b52c')+p('M21 14V26M16 22L21 27L26 22','','#fff',3.500),
dimi:p('M12 5V25L1 15ZM18 5V25L29 15Z',Y)+r(13,14,4,3,'#b5a728'),
tabx:p('M4 4L26 26M26 4L4 26','','#11161a',3.500),
win:`<linearGradient id="wg" x2="1" y2="1"><stop stop-color="#3fc6f5"/><stop offset="1" stop-color="#0570c8"/></linearGradient>`+p('M1 1H14.500V14.500H1ZM15.500 1H29V14.500H15.500ZM1 15.500H14.500V29H1ZM15.500 15.500H29V29H15.500Z','url(#wg)'),
search:c(13,13,11,'#dfe5ee','#23262b',2.800)+p('M21 21L28 28','','#23262b',3.500),
task:r(10,1,20,20,'#fff')+r(1,9,20,20,'#2b2b2b')+r(10,9,11,12,'#c8c8c8'),
files:p('M1 3Q1 1 3 1H11L14 5H1Z','#c89117')+p('M1 5H28Q30 5 30 7V27Q30 28 28 28H1Z','#fbd24c')+p('M6 28V22Q6 20 8 20H23Q25 20 25 22V28Z','#1673c0'),
store:p('M9 7V4Q9 1 12 1H18Q21 1 21 4V7','','#53b7dc',2)+`<rect x="1" y="6" width="28" height="24" rx="3" fill="#1b4e86"/>`+r(9,12,5.500,5.500,'#f25022')+r(15.500,12,5.500,5.500,'#7fba00')+r(9,18.500,5.500,5.500,'#00a4ef')+r(15.500,18.500,5.500,5.500,'#ffb900'),
ps:r(2,2,26,26,'#0b1c2e','#5fb6d3',2.500)+t(6,21,15,'#37b4ea','Ps','font-family="Open Sans" font-weight="600"'),
ai:r(2,2,26,26,'#2a1203','#d58a55',2.500)+t(7,21,15,'#f07c20','Ai','font-family="Open Sans" font-weight="600"'),
chrome:p('M27 6A14 14 0 1 0 27 24L21 19A7 7 0 1 1 21 11Z','#4285ea')+c(15,15,5.500,'#33a853')+p('M20 11Q26 7 29 13V20Q23 22 20 19Q23 15 20 11Z','#fbbc15'),
fcapp:t(1,26,32,'#d8371c','F',bold)+gear(20,19,9,'#173c8c','#fff'),
recapp:c(15,15,14,'#fff','#555',1)+c(15,15,12,'#0b0b0b')+c(15,15,7,'#ef2424'),
ink:p('M15 1L28 13Q29 16 22 16L26 20L19 20L22 24L16 29L10 25L14 22L4 19L8 16Q1 16 2 13Z','#1b1b1b')+p('M15 3L21 9L17 12L14 10L10 12L8 9Z','#e6e6e6')+p('M20 22H27V24H20Z','#333')
};
const svg=(n,s)=>`<svg class="glyph" width="${s}" height="${s}" viewBox="0 0 30 30" aria-hidden="true">${I[n]}</svg>`;
const arr='<svg class="arr" width="12" height="8"><path d="M1.500 1.500L6 6l4.500-4.500" fill="none" stroke="#0e1317" stroke-width="2.400"/></svg>';
document.querySelectorAll('[data-icon]').forEach(e=>e.innerHTML=svg(e.dataset.icon,e.dataset.size));
document.querySelectorAll('[data-bar]').forEach(e=>{
  e.innerHTML='<i class="grip"></i>'+e.dataset.bar.split(' ').map(k=>{
    if(k==='|')return '<i class="tsep"></i>';
    const n=k.replace(/[_*^]/g,''),w=k.includes('_'),on=k.includes('*');
    return `<button class="tool${w?' wide':''}${on?' on':''}" aria-label="${n}">${svg(n,28)}${w||k.includes('^')?arr:''}</button>`;
  }).join('');
});
document.getElementById('apps').innerHTML=['win','search','task','files.','store','ps','ai.','chrome.','fcapp.*','recapp.','ink.'].map(k=>{
  const n=k.replace(/[.*]/g,'');
  return `<button class="appbtn${k.includes('.')?' run':''}${k.includes('*')?' on':''}" aria-label="${n}">${svg(n,28)}</button>`;
}).join('');

// 3D view: ruled working plane, part, dimensions, navigation cube and axis cross
let minor='',major='',ticks='M782 940V278H1465V940';
for(let i=0;i<=100;i++){const x=813+i*6.2,y=309+i*6.2;(i%10)?minor+=`M${x} 309V929M813 ${y}H1433`:major+=`M${x} 309V929M813 ${y}H1433`;}
for(let i=0;i<=10;i++)ticks+=`M${813+62*i} 278v12M782 ${309+62*i}h13M1465 ${309+62*i}h-12`;
const K='#0b1420',N='#94b0e6';
document.getElementById('view').innerHTML=`
<defs><linearGradient id="sky" x2="0" y2="1"><stop stop-color="#3964d0"/><stop offset=".3" stop-color="#2f5ab5"/><stop offset=".47" stop-color="#2b55a1"/><stop offset=".58" stop-color="#385b9b"/><stop offset=".78" stop-color="#5a6a89"/><stop offset="1" stop-color="#73726f"/></linearGradient>
<linearGradient id="cyl"><stop stop-color="#303030"/><stop offset=".02" stop-color="#444"/><stop offset=".06" stop-color="#666"/><stop offset=".14" stop-color="#939393"/><stop offset=".24" stop-color="#b5b5b5"/><stop offset=".36" stop-color="#c9c9c9"/><stop offset=".52" stop-color="#d5d5d5"/><stop offset=".66" stop-color="#c9c9c9"/><stop offset=".78" stop-color="#a8a8a8"/><stop offset=".88" stop-color="#7c7c7c"/><stop offset=".95" stop-color="#525252"/><stop offset="1" stop-color="#1e1e1e"/></linearGradient></defs>
<rect x="-400" y="252" width="3400" height="688" fill="url(#sky)"/>
${p(minor,'','rgba(15,25,60,.22)',1)}${p(major,'','rgba(15,25,60,.45)',1)}${p(ticks,'','rgba(25,32,60,.6)',1)}
${p('M1340 619H1433','','#2b7566',2.5)}${p('M1123 619V929','','#2c2ca4',2)}
<rect x="907" y="309" width="433" height="310" fill="url(#cyl)"/>
${p('M909 309H1340M907 619H1340M1123 309V402M1123 526V619','','#b5605e',1.5)}
${c(1123,464,62,'#d4d4d4','#a8544f',1.5)}
${p('M815 252V681M809 308H914M809 619H914M929 619V738M1306 619V738M892 712L929 713H1306L1343 714','',K,1.5)}
${p('M815 308L824 346H806ZM815 619L824 582H806ZM929 713L942 710V716ZM1306 713L1293 710V716Z','#0b0f14')}
<text x="1043" y="703" font-family="Roboto" font-weight="300" font-size="34" fill="${K}">60.83 mm</text>
<text transform="translate(826 389) rotate(90)" font-family="Roboto" font-weight="300" font-size="34" fill="${K}">50.00 mm</text>
<text transform="translate(807 924) rotate(-90)" font-family="Roboto" font-size="13" fill="#4e5563">10.00 mm</text>
${p('M1640 261L1654 275H1627ZM1640 418L1627 404H1654ZM1562 340L1576 327V353ZM1719 340L1705 327V353Z',N)}${c(1712,267,7,N)}
${p('M1617 269L1619 277Q1603 283 1594 294L1600 297L1582 302L1584 284L1588 288Q1599 274 1617 269Z',N)}
${p('M1663 269L1661 277Q1677 283 1686 294L1680 297L1698 302L1696 284L1692 288Q1681 274 1663 269Z',N)}
${p('M1611 302H1670L1678 311V369L1670 377H1611L1603 369V311Z','#c3d3ef')}${p('M1603 311L1611 302V309ZM1678 311L1670 302V309ZM1678 369L1670 377V370Z','#8fa4cc')}
${r(1610,309,61,61,'#bccbe8','#49566f',1.5)}${p('M1611 369H1660','','#7fae9a',1.5)}${p('M1601 379L1608 372','','#c32a45',4)}
<text x="1640" y="344" text-anchor="middle" font-family="Liberation Mono" font-size="11" fill="#20262e">RIGHT</text>
${p('M1668 395L1680 389L1692 395V407L1680 413L1668 407Z','#8999c0')}${p('M1668 395L1680 389L1692 395L1680 400Z','#b3bdd8')}${p('M1680 400L1692 395V407L1680 413Z','#7485b2')}${p('M1697 397H1711L1704 405Z','#46577f')}
${p('M1694 905V886','','#2e2eb0',1.5)}${p('M1694 882L1698 891H1690Z','#2e2eb0')}${p('M1694 905H1710','','#2c8a2c',1.5)}${p('M1717 905L1708 901V909Z','#2c9a2c')}${c(1694,905,3.5,'#b02424')}
<g font-family="Liberation Sans" font-weight="700" font-size="12" fill="#10131a"><text x="1693" y="881">Z</text><text x="1693" y="905">X</text><text x="1717" y="905">Y</text></g>`;
</script>
</body>
</html>
